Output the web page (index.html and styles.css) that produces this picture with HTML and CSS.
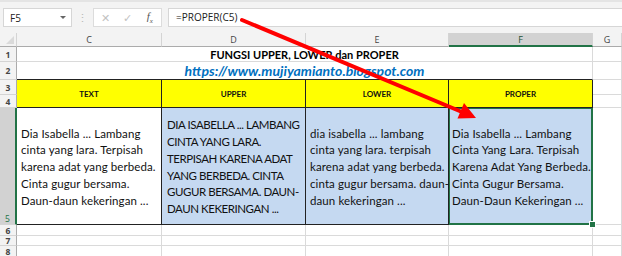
FILE: index.html
```html
<!DOCTYPE html>
<html lang="en">
<head>
    <meta charset="UTF-8">
    <meta name="viewport" content="width=device-width, initial-scale=1.0">
    <title>Fungsi UPPER, LOWER dan PROPER</title>
    <link rel="stylesheet" href="styles.css">
</head>
<body>
    <div class="window">
        <!-- Name box and formula bar -->
        <div class="toolbar">
            <div class="namebox">
                <span>F5</span>
                <span class="caret"></span>
            </div>
            <div class="grip">⋮</div>
            <div class="fbuttons">
                <span class="fbtn">✕</span>
                <span class="fbtn">✓</span>
                <span class="fbtn fx">f<sub>x</sub></span>
            </div>
            <div class="formula">=PROPER(C5)</div>
        </div>

        <!-- Worksheet -->
        <div class="sheet">
            <div class="corner"><span class="corner-mark"></span></div>
            <div class="colhead">C</div>
            <div class="colhead">D</div>
            <div class="colhead">E</div>
            <div class="colhead active">F</div>
            <div class="colhead">G</div>

            <div class="rowhead">1</div>
            <div class="cell title span4">FUNGSI UPPER, LOWER dan PROPER</div>
            <div class="cell"></div>

            <div class="rowhead">2</div>
            <div class="cell url span4">https://www.mujiyamianto.blogspot.com</div>
            <div class="cell"></div>

            <div class="rowhead">3</div>
            <div class="cell label span2r">TEXT</div>
            <div class="cell label span2r">UPPER</div>
            <div class="cell label span2r">LOWER</div>
            <div class="cell label span2r">PROPER</div>
            <div class="cell"></div>
            <div class="rowhead">4</div>
            <div class="cell"></div>

            <div class="rowhead active">5</div>
            <div class="cell body">Dia Isabella ... Lambang<br>cinta yang lara. Terpisah<br>karena adat yang berbeda.<br>Cinta gugur bersama.<br>Daun-daun kekeringan ...</div>
            <div class="cell body blue caps">DIA ISABELLA ... LAMBANG<br>CINTA YANG LARA.<br>TERPISAH KARENA ADAT<br>YANG BERBEDA. CINTA<br>GUGUR BERSAMA. DAUN-<br>DAUN KEKERINGAN ...</div>
            <div class="cell body blue">dia isabella ... lambang<br>cinta yang lara. terpisah<br>karena adat yang berbeda.<br>cinta gugur bersama. daun-<br>daun kekeringan ...</div>
            <div class="cell body blue selected">Dia Isabella ... Lambang<br>Cinta Yang Lara. Terpisah<br>Karena Adat Yang Berbeda.<br>Cinta Gugur Bersama.<br>Daun-Daun Kekeringan ...<span class="handle"></span></div>
            <div class="cell"></div>

            <div class="rowhead">6</div>
            <div class="cell"></div><div class="cell"></div><div class="cell"></div><div class="cell"></div><div class="cell"></div>
            <div class="rowhead">7</div>
            <div class="cell"></div><div class="cell"></div><div class="cell"></div><div class="cell"></div><div class="cell"></div>
            <div class="rowhead">8</div>
            <div class="cell"></div><div class="cell"></div><div class="cell"></div><div class="cell"></div><div class="cell"></div>
        </div>

        <!-- Red arrow drawn over the sheet -->
        <svg class="arrow" width="622" height="256" viewBox="0 0 622 256">
            <line x1="242" y1="20" x2="462" y2="112" stroke="#ff0000" stroke-width="4" stroke-linecap="round"/>
            <polygon points="476,118 457.5,118.5 464,103" fill="#ff0000"/>
        </svg>
    </div>
</body>
</html>
```

FILE: styles.css
```css
/* Page */
body {
    margin: 0;
    background-color: #ffffff;
    font-family: Lato, "Liberation Sans", sans-serif;
    overflow: hidden;
}

.window {
    position: relative;
    width: 622px;
    height: 256px;
    overflow: hidden;
}

/* Formula bar */
.toolbar {
    height: 33px;
    box-sizing: border-box;
    padding-top: 6px;
    display: flex;
    align-items: flex-start;
    background-color: #f3f3f3;
    border-top: 2px solid #e4e4e4;
    font-family: "Open Sans", "Liberation Sans", sans-serif;
}

.namebox {
    width: 69px;
    height: 19px;
    margin-left: 3px;
    box-sizing: border-box;
    display: flex;
    align-items: center;
    justify-content: space-between;
    padding: 0 5px 0 6px;
    background-color: #ffffff;
    border: 1px solid #d6d6d6;
    font-size: 10px;
    color: #222;
}

.caret {
    width: 0;
    height: 0;
    border-left: 3px solid transparent;
    border-right: 3px solid transparent;
    border-top: 3px solid #666;
}

.grip {
    width: 21px;
    text-align: center;
    font-size: 11px;
    line-height: 19px;
    color: #b8b8b8;
}

.fbuttons {
    width: 69px;
    height: 19px;
    box-sizing: border-box;
    display: flex;
    align-items: center;
    background-color: #ffffff;
    border: 1px solid #dcdcdc;
}

.fbtn {
    width: 23px;
    text-align: center;
    font-size: 11px;
    color: #c2c2c2;
}

.fx {
    font-family: "Liberation Serif", serif;
    font-style: italic;
    font-size: 11px;
    color: #555;
}

.fx sub {
    font-size: 7px;
}

.formula {
    flex: 1;
    height: 19px;
    margin-left: 6px;
    box-sizing: border-box;
    padding-left: 7px;
    background-color: #ffffff;
    border: 1px solid #d6d6d6;
    border-right: none;
    font-size: 10px;
    line-height: 17px;
    color: #222;
}

/* Worksheet grid */
.sheet {
    display: grid;
    grid-template-columns: 17px 145px 144px 143px 144px 29px;
    grid-template-rows: 14px 15px 18px 15px 13px 117px 11px 10px 12px;
}

.corner {
    position: relative;
    background-color: #f3f3f3;
    border-right: 1px solid #d4d4d4;
    border-bottom: 1px solid #ababab;
    box-sizing: border-box;
}

.corner-mark {
    position: absolute;
    right: 2px;
    bottom: 2px;
    width: 0;
    height: 0;
    border-left: 8px solid transparent;
    border-bottom: 8px solid #dadada;
}

.colhead {
    box-sizing: border-box;
    background-color: #f3f3f3;
    border-right: 1px solid #d4d4d4;
    border-bottom: 1px solid #ababab;
    text-align: center;
    font-family: "Open Sans", "Liberation Sans", sans-serif;
    font-size: 9px;
    line-height: 13px;
    color: #444;
}

.colhead.active {
    background-color: #d2d2d2;
    border-bottom: 2px solid #217346;
    color: #1f5136;
}

.rowhead {
    box-sizing: border-box;
    display: flex;
    align-items: center;
    justify-content: center;
    background-color: #f3f3f3;
    border-right: 1px solid #ababab;
    border-bottom: 1px solid #d4d4d4;
    font-family: "Open Sans", "Liberation Sans", sans-serif;
    font-size: 8.5px;
    font-weight: bold;
    color: #444;
}

.rowhead.active {
    align-items: flex-end;
    background-color: #d2d2d2;
    border-right: 2px solid #217346;
    color: #217346;
    font-weight: normal;
}

/* Cells */
.cell {
    position: relative;
    box-sizing: border-box;
    border-right: 1px solid #dadada;
    border-bottom: 1px solid #dadada;
    white-space: nowrap;
}

.span4 {
    grid-column: span 4;
}

.span2r {
    grid-row: span 2;
}

.title {
    text-align: center;
    font-size: 11px;
    font-weight: bold;
    line-height: 15px;
    color: #000;
}

.url {
    text-align: center;
    font-size: 14px;
    font-weight: bold;
    font-style: italic;
    line-height: 18px;
    color: #0070c0;
    border-bottom: 1px solid #222;
}

.label {
    display: flex;
    align-items: center;
    justify-content: center;
    background-color: #ffff00;
    border-right: 1px solid #222;
    border-bottom: 1px solid #222;
    font-size: 8px;
    font-weight: bold;
    color: #111;
}

.body {
    display: flex;
    align-items: center;
    padding: 3px 0 0 4px;
    border-right: 1px solid #222;
    border-bottom: 1px solid #222;
    font-size: 11.5px;
    line-height: 16.7px;
    letter-spacing: 0.1px;
    color: #111;
}

.caps {
    padding-left: 5px;
    letter-spacing: -0.45px;
}

.blue {
    background-color: #c5d9f1;
}

.selected {
    padding-left: 3px;
    border-right: 1px solid #217346;
    border-bottom: 1px solid #217346;
    box-shadow: inset 1px 1px 0 #217346, inset -1px -1px 0 #217346;
}

.handle {
    position: absolute;
    right: -4px;
    bottom: -4px;
    width: 5px;
    height: 5px;
    background-color: #217346;
    border: 1px solid #ffffff;
    z-index: 2;
}

/* Annotation arrow */
.arrow {
    position: absolute;
    left: 0;
    top: 0;
    pointer-events: none;
}
```
